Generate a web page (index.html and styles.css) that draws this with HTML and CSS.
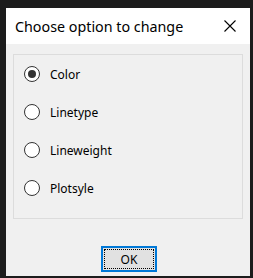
FILE: index.html
```html
<!DOCTYPE html>
<html lang="en">
<head>
<meta charset="UTF-8" />
<title>Choose option to change</title>
<link rel="stylesheet" href="styles.css">
</head>
<body>

<div class="dialog">
  <div class="titlebar">
    <span class="title">Choose option to change</span>
    <svg class="close" width="12" height="12" viewBox="0 0 12 12">
      <path d="M0.5 0.5 L11.5 11.5 M11.5 0.5 L0.5 11.5" stroke="#000" stroke-width="1.1" fill="none" />
    </svg>
  </div>

  <div class="content">
    <div class="group">
      <label class="option"><span class="radio checked"></span>Color</label>
      <label class="option"><span class="radio"></span>Linetype</label>
      <label class="option"><span class="radio"></span>Lineweight</label>
      <label class="option"><span class="radio"></span>Plotsyle</label>
    </div>
    <div class="buttons">
      <button class="ok">OK</button>
    </div>
  </div>
</div>

</body>
</html>
```

FILE: styles.css
```css
body {
  background-color: #1c1c1c;
  margin: 0;
  padding: 8px 3px 0 6px;
  height: 278px;
  box-sizing: border-box;
  font-family: "Noto Sans", "DejaVu Sans", sans-serif;
}

.dialog {
  width: 244px;
  height: 268px;
  background-color: #f0f0f0;
  display: flex;
  flex-direction: column;
}

.titlebar {
  height: 36px;
  background-color: white;
  display: flex;
  align-items: center;
  justify-content: space-between;
  padding: 0 14px 0 9px;
  flex-shrink: 0;
}

.title {
  font-size: 14.3px;
  color: #000;
}

.content {
  padding: 10px 7px 0 7px;
}

.group {
  border: 1px solid #dcdcdc;
  height: 165px;
  box-sizing: border-box;
  padding-top: 0;
}

.option {
  display: flex;
  align-items: center;
  height: 38px;
  font-size: 12px;
  color: #000;
}

.radio {
  width: 14px;
  height: 14px;
  border: 1px solid #333;
  border-radius: 50%;
  background-color: white;
  margin-left: 10px;
  margin-right: 10px;
  position: relative;
}

.radio.checked::after {
  content: "";
  position: absolute;
  left: 3px;
  top: 3px;
  width: 8px;
  height: 8px;
  border-radius: 50%;
  background-color: #333;
}

.buttons {
  display: flex;
  justify-content: center;
  padding-top: 27px;
  padding-left: 2px;
}

.ok {
  width: 56px;
  height: 26px;
  background-color: #e1e1e1;
  border: 2px solid #0078d7;
  outline: 1px dotted #000;
  outline-offset: -4px;
  font-family: inherit;
  font-size: 12px;
  color: #000;
  padding: 0;
}
```
